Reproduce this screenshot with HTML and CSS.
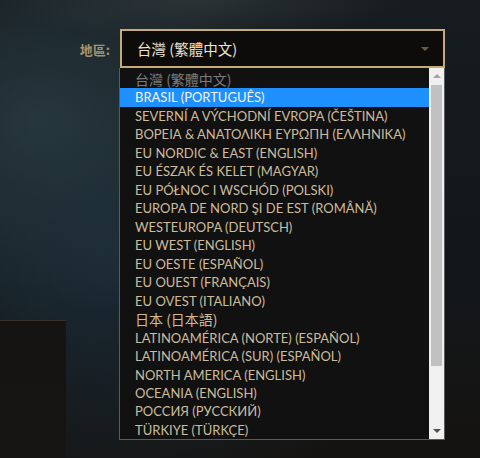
FILE: index.html
```html
<!DOCTYPE html>
<html lang="zh-Hant">

<head>
    <meta charset="UTF-8">
    <meta name="viewport" content="width=device-width, initial-scale=1.0">
    <title>地區</title>
    <link rel="stylesheet" href="styles.css">
</head>

<body>
    <div class="page">
        <div class="field">
            <span class="label">地區:</span>
            <div class="select">
                <div class="select-box">
                    <span class="value">台灣 (繁體中文)</span>
                    <span class="arrow"></span>
                </div>
                <div class="dropdown">
                    <ul class="options">
                        <li class="disabled cjk">台灣 (繁體中文)</li>
                        <li class="active">BRASIL (PORTUGUÊS)</li>
                        <li>SEVERNÍ A VÝCHODNÍ EVROPA (ČEŠTINA)</li>
                        <li>ΒΟΡΕΙΑ &amp; ΑΝΑΤΟΛΙΚΗ ΕΥΡΩΠΗ (ΕΛΛΗΝΙΚΆ)</li>
                        <li>EU NORDIC &amp; EAST (ENGLISH)</li>
                        <li>EU ÉSZAK ÉS KELET (MAGYAR)</li>
                        <li>EU PÓŁNOC I WSCHÓD (POLSKI)</li>
                        <li>EUROPA DE NORD ŞI DE EST (ROMÂNĂ)</li>
                        <li>WESTEUROPA (DEUTSCH)</li>
                        <li>EU WEST (ENGLISH)</li>
                        <li>EU OESTE (ESPAÑOL)</li>
                        <li>EU OUEST (FRANÇAIS)</li>
                        <li>EU OVEST (ITALIANO)</li>
                        <li class="cjk">日本 (日本語)</li>
                        <li>LATINOAMÉRICA (NORTE) (ESPAÑOL)</li>
                        <li>LATINOAMÉRICA (SUR) (ESPAÑOL)</li>
                        <li>NORTH AMERICA (ENGLISH)</li>
                        <li>OCEANIA (ENGLISH)</li>
                        <li>РОССИЯ (РУССКИЙ)</li>
                        <li>TÜRKIYE (TÜRKÇE)</li>
                    </ul>
                    <div class="scrollbar">
                        <div class="btn up"></div>
                        <div class="track">
                            <div class="thumb"></div>
                        </div>
                        <div class="btn down"></div>
                    </div>
                </div>
            </div>
        </div>
        <div class="panel"></div>
    </div>
</body>

</html>
```

FILE: styles.css
```css
* {
    padding: 0;
    margin: 0;
    box-sizing: border-box;
}

body {
    width: 480px;
    height: 458px;
    overflow: hidden;
    font-family: Lato, "Noto Sans CJK TC", sans-serif;
}

.page {
    width: 480px;
    height: 458px;
    position: relative;
    background:
        radial-gradient(ellipse 200px 40px at 200px 0px, rgba(60, 70, 72, 0.5), transparent),
        radial-gradient(ellipse 260px 200px at 40px 120px, rgba(42, 62, 68, 0.75), transparent),
        radial-gradient(ellipse 300px 260px at 120px 260px, rgba(28, 46, 58, 0.8), transparent),
        linear-gradient(180deg, #171c20 0%, #13171b 55%, #151311 100%);
}

.field {
    display: flex;
    align-items: flex-start;
    padding-top: 29px;
    position: relative;
    z-index: 2;
}

.label {
    width: 110px;
    text-align: right;
    margin-right: 10px;
    margin-top: 11px;
    color: #a8946c;
    font-size: 13px;
    font-weight: bold;
    font-family: "Noto Sans CJK TC", sans-serif;
}

.select {
    width: 325px;
    position: relative;
}

.select-box {
    height: 39px;
    border: 2px solid #c6ab74;
    background: #0e0c0b;
    display: flex;
    align-items: center;
    padding: 0 14px 0 15px;
    justify-content: space-between;
}

.value {
    color: #ece4d6;
    font-size: 14.5px;
    font-family: "Noto Sans CJK TC", sans-serif;
}

.arrow {
    width: 0;
    height: 0;
    border-left: 4px solid transparent;
    border-right: 4px solid transparent;
    border-top: 4px solid #6a5c48;
}

.dropdown {
    position: absolute;
    top: 39px;
    left: -1px;
    width: 326px;
    height: 372px;
    display: flex;
    border-left: 1px solid #5b5b5b;
    border-bottom: 1px solid #5b5b5b;
    background: #111111;
}

.options {
    flex: 1;
    list-style: none;
    padding-top: 2px;
}

.options li {
    height: 18.47px;
    line-height: 18.47px;
    padding-left: 15px;
    color: #cdbc9c;
    font-size: 13px;
    white-space: nowrap;
}

.options li.cjk {
    font-family: "Noto Sans CJK TC", sans-serif;
    font-size: 14px;
}

.options li.disabled {
    color: #7c7c7c;
}

.options li.active {
    background: #1e90ff;
    color: #f4f4f4;
}

.scrollbar {
    width: 16px;
    background: #f0f0f0;
    display: flex;
    flex-direction: column;
    border-right: 1px solid #5b5b5b;
}

.btn {
    height: 16px;
    display: flex;
    align-items: center;
    justify-content: center;
}

.btn::after {
    content: "";
    border-left: 4px solid transparent;
    border-right: 4px solid transparent;
}

.btn.up::after {
    border-bottom: 4px solid #a3a3a3;
}

.btn.down::after {
    border-top: 4px solid #505050;
}

.track {
    flex: 1;
    padding: 1px 2px;
}

.thumb {
    height: 281px;
    background: #c1c1c1;
}

.panel {
    position: absolute;
    left: 0;
    top: 320px;
    width: 66px;
    height: 138px;
    border-top: 1px solid #38312b;
    background: linear-gradient(180deg, #161412, #171513);
}
```
